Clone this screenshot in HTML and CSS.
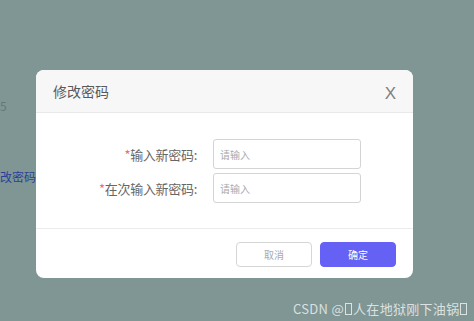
FILE: index.html
```html
<!DOCTYPE html>
<html lang="zh">
<head>
<meta charset="utf-8">
<link rel="stylesheet" href="styles.css">
</head>
<body>
<div class="page">
  <div class="bg-num">5</div>
  <div class="bg-link">改密码</div>
</div>
<div class="dialog">
  <div class="dialog-header">
    <span class="dialog-title">修改密码</span>
    <span class="dialog-close">X</span>
  </div>
  <div class="dialog-body">
    <div class="form-row">
      <label class="form-label"><span class="req">*</span>输入新密码:</label>
      <div class="form-input">请输入</div>
    </div>
    <div class="form-row">
      <label class="form-label"><span class="req">*</span>在次输入新密码:</label>
      <div class="form-input">请输入</div>
    </div>
  </div>
  <div class="dialog-footer">
    <button class="btn btn-cancel">取消</button>
    <button class="btn btn-ok">确定</button>
  </div>
</div>
<div class="watermark">CSDN @<span class="tofu"></span>人在地狱刚下油锅<span class="tofu"></span></div>
</body>
</html>
```
FILE: styles.css
```css
html, body {
  margin: 0;
  padding: 0;
  width: 474px;
  height: 321px;
  overflow: hidden;
  background: #7f9694;
  font-family: "Noto Sans CJK SC", "Liberation Sans", sans-serif;
}
.page {
  display: flex;
  flex-direction: column;
  padding-top: 98px;
  color: #5d6f6d;
  font-size: 12px;
}
.bg-num {
  margin-left: 0;
  line-height: 16px;
  color: #64787a;
}
.bg-link {
  margin-top: 55px;
  margin-left: 0;
  line-height: 16px;
  color: #2d3e9a;
}
.dialog {
  position: absolute;
  left: 36px;
  top: 70px;
  width: 377px;
  height: 208px;
  background: #fff;
  border-radius: 8px;
  overflow: hidden;
  display: flex;
  flex-direction: column;
}
.dialog-header {
  height: 42px;
  background: #f7f7f7;
  border-bottom: 1px solid #e9e9e9;
  display: flex;
  align-items: center;
  justify-content: space-between;
  padding: 0 17px 0 17px;
}
.dialog-title {
  font-size: 14px;
  color: #5a5a5a;
}
.dialog-close {
  font-family: "Liberation Sans", sans-serif;
  font-size: 17px;
  color: #808080;
  margin-top: 5px;
}
.dialog-body {
  height: 116px;
  border-bottom: 1px solid #ececec;
  box-sizing: border-box;
  padding-top: 26px;
  display: flex;
  flex-direction: column;
  gap: 4px;
}
.form-row {
  display: flex;
  align-items: center;
}
.form-label {
  width: 177px;
  text-align: right;
  font-size: 13px;
  color: #666;
  padding-right: 16px;
  box-sizing: border-box;
  letter-spacing: -0.3px;
}
.req {
  color: #f56c6c;
}
.form-input {
  width: 148px;
  height: 30px;
  box-sizing: border-box;
  border: 1px solid #d4d4d4;
  border-radius: 3px;
  font-size: 10px;
  color: #aaa;
  display: flex;
  align-items: center;
  padding-left: 6px;
}
.dialog-footer {
  flex: 1;
  display: flex;
  justify-content: flex-end;
  align-items: flex-start;
  gap: 8px;
  padding: 13px 17px 0 0;
}
.btn {
  width: 76px;
  height: 25px;
  border-radius: 4px;
  font-family: "Noto Sans CJK SC", sans-serif;
  font-size: 10px;
  padding: 0;
  cursor: pointer;
}
.btn-cancel {
  background: #fff;
  border: 1px solid #d6d6d6;
  color: #aaa;
}
.btn-ok {
  background: #6561f5;
  border: 1px solid #6561f5;
  color: #fff;
}
.watermark {
  position: absolute;
  left: 293px;
  top: 299px;
  font-size: 13px;
  color: rgba(235, 240, 240, 0.85);
  display: flex;
  align-items: center;
  letter-spacing: 0.3px;
}
.tofu {
  display: inline-block;
  width: 5px;
  height: 10px;
  border: 1px solid rgba(235, 240, 240, 0.85);
  margin: 0 1px;
}
```
